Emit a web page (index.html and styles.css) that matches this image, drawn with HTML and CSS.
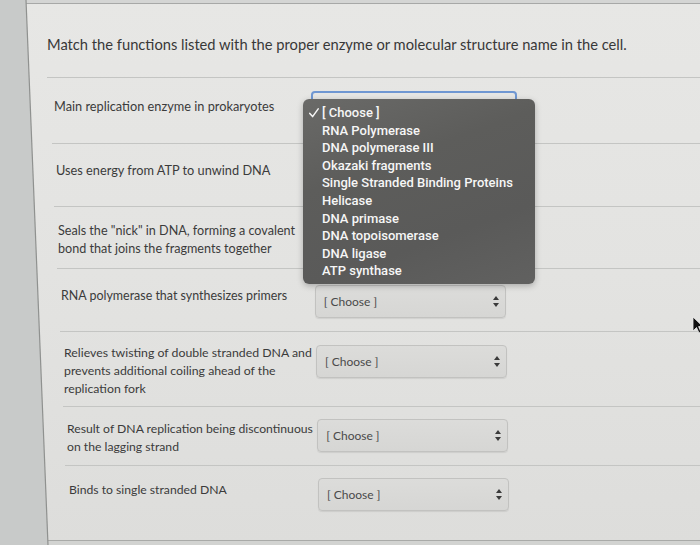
FILE: index.html
```html
<!DOCTYPE html>
<html lang="en">
<head>
<meta charset="utf-8">
<title>Matching question</title>
<link rel="stylesheet" href="styles.css">
</head>
<body>
<div class="screen">
  <div class="topbar"></div>
  <div class="card">
    <p class="title">Match the functions listed with the proper enzyme or molecular structure name in the cell.</p>
    <div class="rows">
      <div class="row r1">
        <div class="label">Main replication enzyme in prokaryotes</div>
        <div class="select focused"><span class="value">[ Choose ]</span><span class="arrows"></span></div>
      </div>
      <div class="row r2">
        <div class="label">Uses energy from ATP to unwind DNA</div>
        <div class="select hidden"><span class="value">[ Choose ]</span><span class="arrows"></span></div>
      </div>
      <div class="row r3">
        <div class="label">Seals the "nick" in DNA, forming a covalent<br>bond that joins the fragments together</div>
        <div class="select hidden"><span class="value">[ Choose ]</span><span class="arrows"></span></div>
      </div>
      <div class="row r4">
        <div class="label">RNA polymerase that synthesizes primers</div>
        <div class="select"><span class="value">[ Choose ]</span><span class="arrows"></span></div>
      </div>
      <div class="row r5">
        <div class="label">Relieves twisting of double stranded DNA and<br>prevents additional coiling ahead of the<br>replication fork</div>
        <div class="select"><span class="value">[ Choose ]</span><span class="arrows"></span></div>
      </div>
      <div class="row r6">
        <div class="label">Result of DNA replication being discontinuous<br>on the lagging strand</div>
        <div class="select"><span class="value">[ Choose ]</span><span class="arrows"></span></div>
      </div>
      <div class="row r7">
        <div class="label">Binds to single stranded DNA</div>
        <div class="select"><span class="value">[ Choose ]</span><span class="arrows"></span></div>
      </div>
    </div>
  </div>
  <div class="bottombar"></div>

  <svg class="edge" width="60" height="545" viewBox="0 0 60 545">
    <polygon points="0,0 26,0 48,545 0,545" fill="#c8cac9"/>
    <line x1="26" y1="0" x2="48" y2="545" stroke="#8f918f" stroke-width="1.2"/>
  </svg>

  <ul class="menu">
    <li class="checked"><svg class="check" width="10" height="10" viewBox="0 0 10 10"><path d="M0.8 5.4 L3.6 8.6 L9.2 0.9" fill="none" stroke="#f6f6f6" stroke-width="1.5" stroke-linecap="round" stroke-linejoin="round"/></svg>[ Choose ]</li>
    <li>RNA Polymerase</li>
    <li>DNA polymerase III</li>
    <li>Okazaki fragments</li>
    <li>Single Stranded Binding Proteins</li>
    <li>Helicase</li>
    <li>DNA primase</li>
    <li>DNA topoisomerase</li>
    <li>DNA ligase</li>
    <li>ATP synthase</li>
  </ul>

  <svg class="cursor" width="12" height="18" viewBox="0 0 12 18">
    <path d="M1 1 L1 15 L4.5 11.5 L7 17 L9 16 L6.6 10.6 L11 10.6 Z" fill="#111" stroke="#eee" stroke-width="0.8"/>
  </svg>
</div>
</body>
</html>
```

FILE: styles.css
```css
* { box-sizing: border-box; }

html, body {
  margin: 0;
  padding: 0;
  background: #e2e2e0;
}

.screen {
  position: relative;
  width: 700px;
  height: 545px;
  overflow: hidden;
  background: linear-gradient(180deg, #e7e7e5 0%, #e3e3e1 50%, #dddddb 100%);
  font-family: Lato, "Open Sans", sans-serif;
  color: #3a3a3a;
  display: flex;
  flex-direction: column;
}

.topbar {
  height: 4px;
  flex: 0 0 4px;
  background: #d4d5d4;
  border-bottom: 1px solid #a7a8a7;
}

.card {
  flex: 1 1 auto;
  display: flex;
  flex-direction: column;
}

.title {
  margin: 30px 0 0 47px;
  padding-bottom: 23px;
  font-size: 14.7px;
  line-height: 20px;
  color: #383838;
  border-bottom: 1px solid #c4c5c3;
}

.rows {
  flex: 1 1 auto;
  display: flex;
  flex-direction: column;
}

.row {
  --shift: 0px;
  --ty: 3px;
  --fs: 12.75px;
  display: flex;
  align-items: flex-start;
  margin-left: calc(50px + var(--shift));
  padding: 14px 0 6px;
  min-height: 62px;
  border-top: 1px solid #c4c5c3;
}

.row.r1 { border-top: none; min-height: 65px; padding-top: 12px; --ty: 7px; }
.row.r2 { --shift: 2px; min-height: 63px; --ty: 3px; }
.row.r3 { --shift: 4px; --ty: 1px; --fs: 12.6px; }
.row.r4 { --shift: 7px; min-height: 63px; --ty: 2px; padding-top: 16px; --fs: 12.45px; }
.row.r5 { --shift: 10px; --ty: -1px; padding-top: 13px; padding-bottom: 8px; --fs: 12.3px; }
.row.r6 { --shift: 13px; min-height: 59px; --ty: 1px; padding-top: 12px; --fs: 12.2px; }
.row.r7 { --shift: 15px; flex: 1 1 auto; --ty: 3px; padding-top: 12px; --fs: 12.2px; }

.label {
  flex: 0 0 auto;
  width: calc(262px - var(--shift) * 0.6);
  padding-left: 4px;
  margin-top: var(--ty);
  font-size: var(--fs);
  line-height: 18px;
  white-space: nowrap;
  color: #3b3b3b;
}

.select {
  flex: 0 0 auto;
  width: 191px;
  height: 33px;
  display: flex;
  align-items: center;
  justify-content: space-between;
  padding: 0 5px 0 8px;
  border: 1px solid #c2c2c0;
  border-radius: 4px;
  background: linear-gradient(180deg, #dcdcda 0%, #d6d6d4 100%);
  box-shadow: 0 1px 1px rgba(0,0,0,0.08);
  font-size: 12px;
  color: #4a4a4a;
}

.select.focused {
  width: 206px;
  margin-left: -1px;
  margin-top: 1px;
  border: 2px solid #6f97d2;
  background: #e6e6e4;
}

.select.focused .value { visibility: hidden; }

.select.hidden { visibility: hidden; }

.arrows {
  position: relative;
  width: 7px;
  height: 11px;
}
.arrows::before,
.arrows::after {
  content: "";
  position: absolute;
  left: 0;
  border-left: 3.5px solid transparent;
  border-right: 3.5px solid transparent;
}
.arrows::before { top: 0; border-bottom: 4px solid #3a3a3a; }
.arrows::after { bottom: 0; border-top: 4px solid #3a3a3a; }

.bottombar {
  height: 5px;
  flex: 0 0 5px;
  border-top: 1px solid #a9aaa8;
  background: #d2d3d1;
}

.edge {
  position: absolute;
  left: 0;
  top: 0;
}

.menu {
  position: absolute;
  left: 303px;
  top: 99px;
  width: 232px;
  height: 185px;
  margin: 0;
  padding: 5px 0 0 19px;
  list-style: none;
  border-radius: 6px;
  background: linear-gradient(160deg, #6a6a68 0%, #5d5d5b 35%, #5a5a59 70%, #616160 100%);
  box-shadow: 0 2px 6px rgba(0,0,0,0.25);
  font-family: Roboto, "Liberation Sans", sans-serif;
  font-weight: 500;
  font-size: 13px;
  line-height: 17.6px;
  color: #f6f6f6;
}

.menu li {
  position: relative;
  white-space: nowrap;
}

.check {
  position: absolute;
  left: -13px;
  top: 4px;
}

.cursor {
  position: absolute;
  left: 692px;
  top: 316px;
}
```
